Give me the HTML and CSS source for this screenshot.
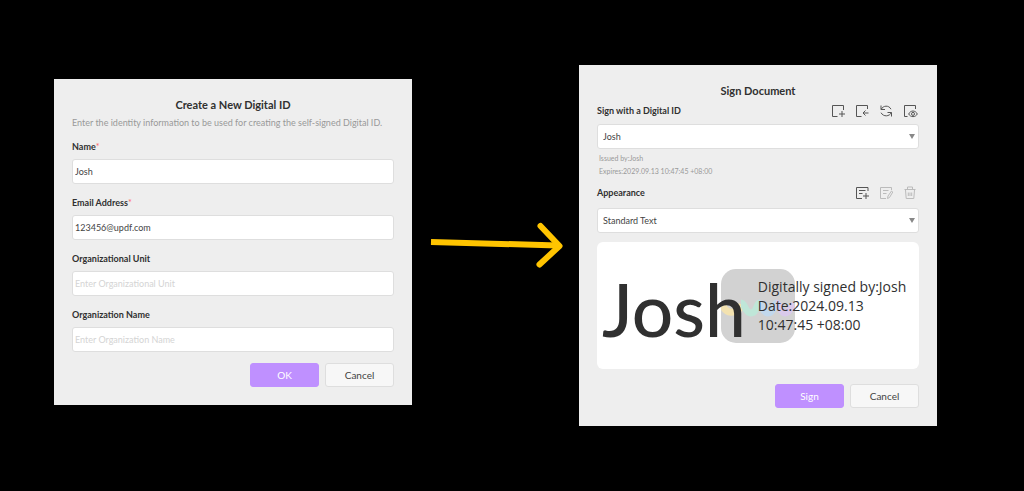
FILE: index.html
```html
<!DOCTYPE html>
<html lang="en">
<head>
<meta charset="utf-8">
<title>Create and use a Digital ID</title>
<link rel="stylesheet" href="styles.css">
</head>
<body>
<main class="stage">
  <form class="panel create">
    <h2 class="title">Create a New Digital ID</h2>
    <p class="subtitle">Enter the identity information to be used for creating the self-signed Digital ID.</p>
    <div class="field">
      <label for="name">Name<span class="required">*</span></label>
      <input id="name" type="text" value="Josh">
    </div>
    <div class="field">
      <label for="email">Email Address<span class="required">*</span></label>
      <input id="email" type="text" value="123456@updf.com">
    </div>
    <div class="field">
      <label for="unit">Organizational Unit</label>
      <input id="unit" type="text" placeholder="Enter Organizational Unit">
    </div>
    <div class="field">
      <label for="org">Organization Name</label>
      <input id="org" type="text" placeholder="Enter Organization Name">
    </div>
    <div class="actions">
      <button type="button" class="btn primary">OK</button>
      <button type="button" class="btn">Cancel</button>
    </div>
  </form>

  <svg class="arrow" viewBox="0 0 167 60" fill="none" stroke="#ffc400" aria-hidden="true">
    <path d="M19 26 146 29.500" stroke-width="6"/>
    <path d="M128.500 10 147.500 30 127.500 48.500" stroke-width="6" stroke-linecap="round" stroke-linejoin="round"/>
  </svg>

  <form class="panel sign">
    <h2 class="title">Sign Document</h2>
    <div class="row">
      <label for="digital-id">Sign with a Digital ID</label>
      <div class="tools">
        <button type="button" class="tool" aria-label="New ID"><svg viewBox="0 0 16 16"><path d="M12.500 7V2.500H1.500V13.500H6.500M8 11H14M11 8V14"/></svg></button>
        <button type="button" class="tool" aria-label="Import ID"><svg viewBox="0 0 16 16"><path d="M12.500 6V2.500H1.500V13.500H6.500M13.500 10H8M10.500 7.500 8 10 10.500 12.500"/></svg></button>
        <button type="button" class="tool" aria-label="Refresh"><svg viewBox="0 0 16 16"><path d="M2 2.500V6.500H6M2.200 6.300C4 2.500 9.800 1.800 12 6.200M12.500 13.500V9.500H8.500M12.300 9.700C10.500 13.500 4.500 14.200 2 9.700"/></svg></button>
        <button type="button" class="tool" aria-label="View ID"><svg viewBox="0 0 16 16"><path d="M12.500 6V2.500H1.500V13.500H4.500M5.700 11C7.500 7 12.500 7 14.300 11 12.500 14.500 7.500 14.500 5.700 11Z"/><circle cx="10" cy="10.900" r="1.500"/></svg></button>
      </div>
    </div>
    <div class="select">
      <select id="digital-id"><option>Josh</option></select>
      <svg class="caret" viewBox="0 0 6 5"><path d="M0 0H6L3 5Z"/></svg>
    </div>
    <p class="details">Issued by:Josh<br>Expires:2029.09.13 10:47:45 +08:00</p>
    <div class="row roomy">
      <label for="appearance">Appearance</label>
      <div class="tools">
        <button type="button" class="tool" aria-label="Add appearance"><svg viewBox="0 0 16 16"><path d="M13 6V2.500H1.500V13.500H7M4 5.500H10.500M4 8.500H7.500M8 11H14M11 8V14"/></svg></button>
        <button type="button" class="tool" aria-label="Edit appearance" disabled><svg viewBox="0 0 16 16"><path d="M12.500 5V2.500H1.500V13.500H7M4 5.500H9.500M4 8.500H7.500M8.500 13.500 9 11 12.500 6 13.800 7 10.500 12.500Z"/></svg></button>
        <button type="button" class="tool" aria-label="Delete appearance" disabled><svg viewBox="0 0 16 16"><path d="M1.500 4.500H12.500M4.500 4V2H9.500V4M2.500 5 3.200 13.500H10.800L11.500 5M5.300 7.500V11M7 7.500V11M8.700 7.500V11"/></svg></button>
      </div>
    </div>
    <div class="select">
      <select id="appearance"><option>Standard Text</option></select>
      <svg class="caret" viewBox="0 0 6 5"><path d="M0 0H6L3 5Z"/></svg>
    </div>
    <div class="preview">
      <svg class="watermark" viewBox="0 0 74 74" fill="none" stroke-width="7" aria-hidden="true">
        <rect width="74" height="74" rx="15" fill="#d2d2d2"/>
        <path d="M2 37C5 44 14 47 21 36" stroke="#f3e2b0"/>
        <path d="M20 34C24 34 24 44 30 44 36 44 35 35 39 34" stroke="#bfe6d8"/>
        <path d="M38 34C42 34 41 44 47 44 53 44 52 35 56 34" stroke="#c2d8ec"/>
        <path d="M55 34C59 34 59 44 64 44 69 44 69 38 73 36" stroke="#d9caeb"/>
      </svg>
      <span class="signature">Josh</span>
      <span class="stamp">Digitally signed by:Josh<br>Date:2024.09.13<br>10:47:45 +08:00</span>
    </div>
    <div class="actions">
      <button type="button" class="btn primary">Sign</button>
      <button type="button" class="btn">Cancel</button>
    </div>
  </form>
</main>
</body>
</html>
```
FILE: styles.css
```css
* {
  box-sizing: border-box;
}

body {
  margin: 0;
  background: #000;
  color: #303030;
  font: 9px/13px Lato, "Open Sans", sans-serif;
}

.stage {
  display: flex;
  align-items: center;
  min-height: 100vh;
  padding: 0 87px 0 54px;
}

.panel {
  flex: 1 1 0;
  min-width: 0;
  padding: 18px;
  background: #eee;
}

.create {
  margin-bottom: 7px;
}

.arrow {
  flex: none;
  width: 167px;
}

.title {
  margin: 0;
  font-size: 11px;
  line-height: 16px;
  font-weight: 700;
  text-align: center;
}

.subtitle {
  margin: 3px 0 5px;
  color: #999;
  white-space: nowrap;
}

.field {
  display: flex;
  flex-direction: column;
  margin-bottom: 6px;
}

label {
  font-weight: 700;
}

.field label {
  line-height: 25px;
}

.required {
  color: #f66;
  font-weight: 400;
}

input,
select,
.btn {
  height: 25px;
  border: 1px solid #dedede;
  border-radius: 3px;
  background: #fff;
  color: #444;
  font: inherit;
}

input {
  width: 100%;
  padding: 0 2px;
}

input::placeholder {
  color: #d4d4d4;
}

.actions {
  display: flex;
  justify-content: flex-end;
  gap: 6px;
  padding-top: 5px;
}

.btn {
  width: 69px;
  height: 24px;
  padding: 0;
  background: #f7f7f7;
  font-size: 10px;
}

.primary {
  border-color: #bf90ff;
  background: #bf90ff;
  color: #fff;
}

.row {
  display: flex;
  align-items: center;
  justify-content: space-between;
  height: 25px;
  padding-bottom: 2px;
}

.roomy {
  height: 27px;
  padding-bottom: 4px;
}

.tools {
  display: flex;
  gap: 8px;
}

.tool {
  width: 16px;
  height: 16px;
  padding: 0;
  border: 0;
  background: none;
}

.tool svg {
  display: block;
  width: 16px;
  height: 16px;
  fill: none;
  stroke: #555;
}

.tool:disabled svg {
  stroke: #bbb;
}

.select {
  position: relative;
}

.select select {
  display: block;
  width: 100%;
  padding: 0 5px;
  appearance: none;
}

.caret {
  position: absolute;
  top: 10px;
  right: 4px;
  width: 6px;
  height: 5px;
  fill: #888;
}

.details {
  margin: 3px 0;
  padding-left: 2px;
  color: #999;
  font-size: 7px;
}

.preview {
  position: relative;
  display: flex;
  align-items: center;
  gap: 12px;
  height: 127px;
  margin: 9px 0 10px;
  padding: 0 5px;
  border-radius: 6px;
  background: #fff;
}

.watermark {
  position: absolute;
  top: 50%;
  left: 50%;
  width: 74px;
  height: 74px;
  margin-top: -37px;
  margin-left: -37px;
}

.signature,
.stamp {
  position: relative;
}

.signature {
  padding-top: 6px;
  font: 500 73px/96px Lato, sans-serif;
}

.stamp {
  font: 14px/19px "Open Sans", sans-serif;
  white-space: nowrap;
}
```
